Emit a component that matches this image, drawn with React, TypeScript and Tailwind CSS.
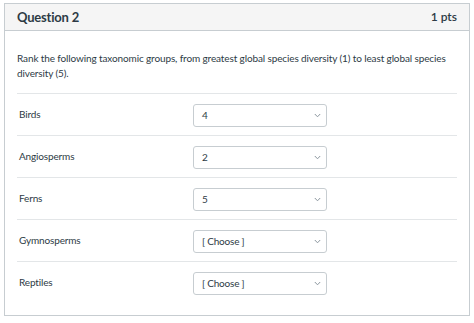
const rows = [
  { label: "Birds", value: "4" },
  { label: "Angiosperms", value: "2" },
  { label: "Ferns", value: "5" },
  { label: "Gymnosperms", value: "[ Choose ]" },
  { label: "Reptiles", value: "[ Choose ]" },
];

function Chevron() {
  return (
    <svg width="7" height="5" viewBox="0 0 7 5" className="text-[#8b969e]">
      <polyline points="0.8,1 3.5,3.8 6.2,1" fill="none" stroke="currentColor" strokeWidth="1" />
    </svg>
  );
}

export default function App() {
  return (
    <div className="min-h-[323px] bg-white pt-[3px] pl-[4px] pr-[4px] font-['Lato','Inter',sans-serif] text-[#2d3b45]">
      <div className="border border-[#c7cdd1] bg-white">
        <div className="flex h-[27px] items-center justify-between border-b border-[#c7cdd1] bg-[#f5f5f5] px-[12px]">
          <h2 className="text-[13px] font-bold leading-none tracking-[-0.2px]">Question 2</h2>
          <span className="text-[12px] font-semibold leading-none">1 pts</span>
        </div>
        <div className="px-[12px] pt-[20px] pb-[12px]">
          <p className="whitespace-nowrap text-[10px] leading-[15px] tracking-[-0.12px]">
            Rank the following taxonomic groups, from greatest global species diversity (1) to least global species
            <br />
            diversity (5).
          </p>
          <div className="mt-[12px]">
            {rows.map((r) => (
              <div key={r.label} className="flex h-[42px] border-t border-[#e3e6e8] pt-[10px]">
                <div className="w-[176px] pl-[2px] pt-[3px] text-[10px] leading-[14px] tracking-[-0.15px]">{r.label}</div>
                <div className="flex h-[23px] w-[134px] items-center justify-between rounded-[3px] border border-[#c7cdd1] bg-white pl-[8px] pr-[5px] text-[10px] tracking-[-0.2px]">
                  <span>{r.value}</span>
                  <Chevron />
                </div>
              </div>
            ))}
          </div>
        </div>
      </div>
    </div>
  );
}
